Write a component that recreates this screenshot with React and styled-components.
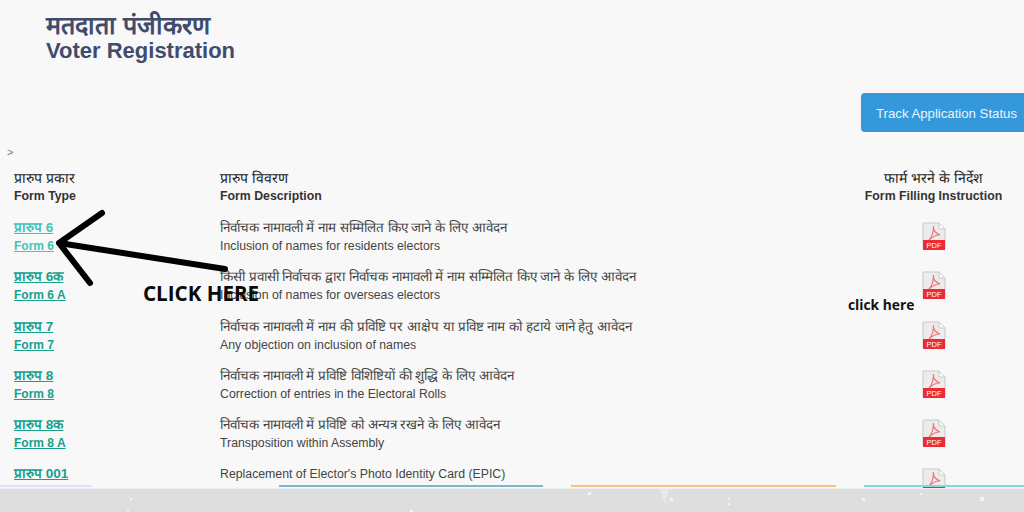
import React from "react";
import styled, { createGlobalStyle } from "styled-components";

const Global = createGlobalStyle`
  html, body { margin: 0; padding: 0; background: #f8f8f8; }
  body { font-family: "Liberation Sans", Arial, sans-serif; }
`;

const Page = styled.div`
  position: relative;
  width: 1024px;
  height: 512px;
  overflow: hidden;
  display: flex;
  flex-direction: column;
  background: #f8f8f8;
`;
const Main = styled.main`
  position: relative;
  height: 488px;
  flex: none;
  overflow: hidden;
`;
const Header = styled.header`
  padding: 11px 0 0 46px;
  color: #3f4c6b;
`;
const TitleHi = styled.div`
  font-size: 25.1px;
  line-height: 28px;
  font-weight: 700;
`;
const TitleEn = styled.h1`
  margin: 0;
  font-size: 22px;
  line-height: 24px;
  font-weight: 700;
`;
const Actions = styled.div`
  display: flex;
  justify-content: flex-end;
  margin: 30px -8px 0 0;
`;
const TrackButton = styled.button`
  width: 171px;
  height: 39px;
  padding: 0 0 0 15px;
  border: 0;
  border-radius: 4px;
  background: #3498db;
  color: #eaf5fc;
  font: 400 13.2px/41px "Liberation Sans", Arial, sans-serif;
  text-align: left;
  white-space: nowrap;
`;
const Crumb = styled.div`
  margin: 14px 0 11px 7px;
  height: 12px;
  font-size: 11px;
  line-height: 12px;
  color: #777;
`;
const Row = styled.div`
  display: grid;
  grid-template-columns: 206px 640px 147px;
  padding-left: 14px;
  height: ${(p) => p.$h || 49.25}px;
`;
const Cell = styled.div`
  display: flex;
  flex-direction: column;
  align-items: ${(p) => (p.$center ? "center" : "flex-start")};
  white-space: nowrap;
`;
const HeadHi = styled.div`
  height: 18px;
  font-size: 14px;
  line-height: 18px;
  font-weight: 400;
  color: #222;
`;
const HeadEn = styled.div`
  height: 18px;
  font-size: 12.3px;
  line-height: 18px;
  font-weight: 700;
  color: #333;
`;
const FormLink = styled.a`
  height: 18px;
  font-size: ${(p) => (p.$hi ? 13.5 : 12)}px;
  line-height: 18px;
  font-weight: 700;
  color: ${(p) => (p.$active ? "#43c4b8" : "#17a08c")};
  text-decoration: underline;
`;
const Desc = styled.div`
  height: 18px;
  font-size: ${(p) => (p.$hi ? 13.45 : 12.3)}px;
  line-height: 18px;
  color: #444;
`;
const PdfSvg = styled.svg`
  display: block;
  margin-top: 3px;
`;
const Cards = styled.div`
  position: absolute;
  left: 0;
  right: 0;
  bottom: 0;
  height: 5px;
`;
const CardEdge = styled.div`
  position: absolute;
  left: ${(p) => p.$x}px;
  width: ${(p) => p.$w}px;
  top: ${(p) => p.$top || 2}px;
  height: 2px;
  background: ${(p) => p.$c};
`;
const Footer = styled.footer`
  flex: 1;
  background: #dedede;
  border-top: 1px solid #eee;
`;
const Arrow = styled.svg`
  position: absolute;
  left: 50px;
  top: 205px;
`;
const ClickBig = styled.div`
  position: absolute;
  left: 143px;
  top: 280px;
  font: 700 20.6px/27px "Open Sans", sans-serif;
  color: #0a0a0a;
`;
const ClickSmall = styled.div`
  position: absolute;
  left: 848px;
  top: 296px;
  font: 700 13.8px/18px "Open Sans", sans-serif;
  color: #111;
`;
const Texture = styled.svg`
  display: block;
`;

function PdfIcon() {
  return (
    <PdfSvg width="24" height="29" viewBox="0 0 24 29">
      <path d="M1 1h16l6 6v20H1z" fill="#ececec" stroke="#c9c9c9" />
      <path d="M17 1v6h6z" fill="#fff" stroke="#c9c9c9" />
      <path d="M11.5 4c-.5 4 1.5 7 6.5 9-4 0-7 1-11 5 3-3 4.5-8 4.5-14z" fill="none" stroke="#f0767b" strokeWidth="1.2" />
      <rect x="1" y="18" width="22" height="10" fill="#ee2b33" />
      <text x="12" y="26" textAnchor="middle" fontFamily="Liberation Sans" fontWeight="400" fontSize="7.5" fill="#fff">PDF</text>
    </PdfSvg>
  );
}

const rows = [
  ["प्रारुप 6", "Form 6", "निर्वाचक नामावली में नाम सम्मिलित किए जाने के लिए आवेदन", "Inclusion of names for residents electors", true],
  ["प्रारुप 6क", "Form 6 A", "किसी प्रवासी निर्वाचक द्वारा निर्वाचक नामावली में नाम सम्मिलित किए जाने के लिए आवेदन", "Inclusion of names for overseas electors"],
  ["प्रारुप 7", "Form 7", "निर्वाचक नामावली में नाम की प्रविष्टि पर आक्षेप या प्रविष्ट नाम को हटाये जाने हेतु आवेदन", "Any objection on inclusion of names"],
  ["प्रारुप 8", "Form 8", "निर्वाचक नामावली में प्रविष्टि विशिष्टियों की शुद्धि के लिए आवेदन", "Correction of entries in the Electoral Rolls"],
  ["प्रारुप 8क", "Form 8 A", "निर्वाचक नामावली में प्रविष्टि को अन्यत्र रखने के लिए आवेदन", "Transposition within Assembly"],
  ["प्रारुप 001", "", "", "Replacement of Elector's Photo Identity Card (EPIC)"],
];

export default function App() {
  return (
    <Page>
      <Global />
      <Main>
        <Header>
          <TitleHi>मतदाता पंजीकरण</TitleHi>
          <TitleEn>Voter Registration</TitleEn>
        </Header>
        <Actions>
          <TrackButton>Track Application Status</TrackButton>
        </Actions>
        <Crumb>&gt;</Crumb>
        <Row $h={50}>
          <Cell>
            <HeadHi>प्रारुप प्रकार</HeadHi>
            <HeadEn>Form Type</HeadEn>
          </Cell>
          <Cell>
            <HeadHi>प्रारुप विवरण</HeadHi>
            <HeadEn>Form Description</HeadEn>
          </Cell>
          <Cell $center>
            <HeadHi>फार्म भरने के निर्देश</HeadHi>
            <HeadEn>Form Filling Instruction</HeadEn>
          </Cell>
        </Row>
        {rows.map((r) => (
          <Row key={r[0]}>
            <Cell>
              <FormLink $hi $active={r[4]}>{r[0]}</FormLink>
              {r[1] && <FormLink $active={r[4]}>{r[1]}</FormLink>}
            </Cell>
            <Cell>
              {r[2] && <Desc $hi>{r[2]}</Desc>}
              <Desc>{r[3]}</Desc>
            </Cell>
            <Cell $center>
              <PdfIcon />
            </Cell>
          </Row>
        ))}
        <Cards>
          <CardEdge $x={0} $w={92} $top={0} $c="#e9dcf8" />
          <CardEdge $x={279} $w={264} $c="#7fb3d0" />
          <CardEdge $x={571} $w={265} $c="#f7c08f" />
          <CardEdge $x={864} $w={160} $c="#86d8d8" />
        </Cards>
      </Main>
      <Footer>
        <Texture width="1024" height="23" viewBox="0 0 1024 23">
          <path d="M660 0h9l-4 15z" fill="#e9e9e9" />
          <g fill="#f4f4f4">
            <rect x="130" y="9" width="2" height="2" />
            <rect x="127" y="20" width="2" height="2" />
            <rect x="588" y="3" width="3" height="3" />
            <rect x="670" y="9" width="3" height="3" />
            <rect x="728" y="14" width="2" height="2" />
            <rect x="728" y="9" width="2" height="2" />
            <rect x="862" y="9" width="3" height="3" />
            <rect x="980" y="8" width="4" height="4" />
            <rect x="920" y="4" width="2" height="2" />
            <rect x="410" y="21" width="3" height="2" />
          </g>
        </Texture>
      </Footer>
      <Arrow width="185" height="90" viewBox="0 0 185 90">
        <path d="M52 8 L9 38 L40 78 M9 38 L175 64" fill="none" stroke="#000" strokeWidth="6" strokeLinecap="round" strokeLinejoin="round" />
      </Arrow>
      <ClickBig>CLICK HERE</ClickBig>
      <ClickSmall>click here</ClickSmall>
    </Page>
  );
}
